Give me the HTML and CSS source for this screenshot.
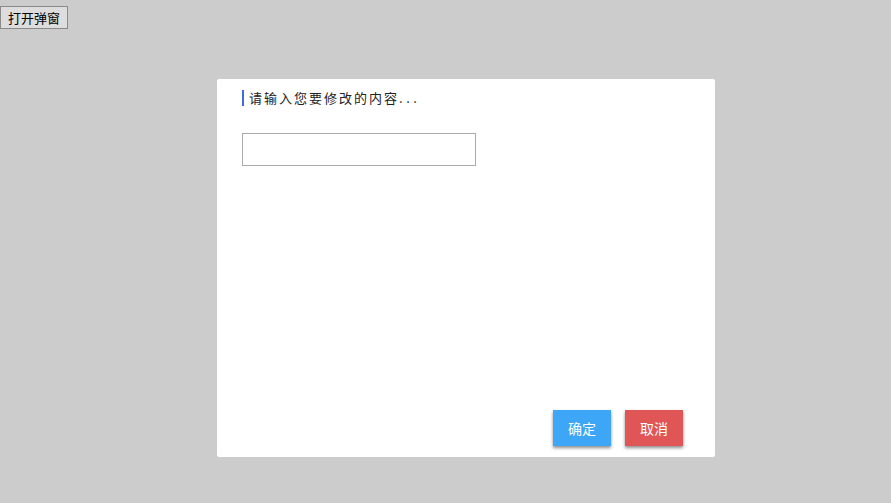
FILE: index.html
```html
<!DOCTYPE html>
<html lang="zh">
<head>
<meta charset="utf-8">
<title>弹窗</title>
<link rel="stylesheet" href="styles.css">
</head>
<body>
<button class="open-btn">打开弹窗</button>
<div class="modal">
  <div class="modal-title">请输入您要修改的内容<span class="dots">...</span></div>
  <input class="modal-input" type="text">
  <div class="modal-footer">
    <button class="btn btn-ok">确定</button>
    <button class="btn btn-cancel">取消</button>
  </div>
</div>
</body>
</html>
```
FILE: styles.css
```css
html, body {
  margin: 0;
  padding: 0;
  background: #cccccc;
  height: 100%;
}
body {
  padding-top: 6px;
  font-family: "Noto Sans CJK SC", "Noto Sans", sans-serif;
}
.open-btn {
  display: block;
  width: 68px;
  height: 23px;
  margin: 0;
  padding: 0;
  font-family: "Noto Sans CJK SC", sans-serif;
  font-size: 13px;
  line-height: 21px;
  color: #000;
  background: #dddddd;
  border: 1px solid #8a8a8a;
  border-radius: 0;
}
.modal {
  position: fixed;
  left: 217px;
  top: 79px;
  width: 498px;
  height: 378px;
  box-sizing: border-box;
  background: #fff;
  border-radius: 2px;
  padding: 11px 32px 11px 25px;
  display: flex;
  flex-direction: column;
  align-items: flex-start;
}
.modal-title {
  border-left: 2px solid #4169e1;
  padding-left: 5px;
  font-size: 13px;
  line-height: 16px;
  letter-spacing: 2px;
  color: #222;
}
.dots {
  letter-spacing: 3.5px;
}
.modal-input {
  margin-top: 27px;
  width: 234px;
  height: 33px;
  box-sizing: border-box;
  border: 1px solid #aaaaaa;
  border-radius: 0;
  padding: 0 6px;
  outline: none;
  font-size: 13px;
}
.modal-footer {
  margin-top: auto;
  align-self: stretch;
  display: flex;
  justify-content: flex-end;
  gap: 14px;
}
.btn {
  width: 58px;
  height: 36px;
  border: none;
  border-radius: 0;
  color: #fff;
  font-family: "Noto Sans CJK SC", sans-serif;
  font-size: 14px;
  padding: 0;
  box-shadow: 0 2px 3px rgba(0, 0, 0, 0.45);
}
.btn-ok {
  background: #3ea6f6;
}
.btn-cancel {
  background: #e05555;
}
```
